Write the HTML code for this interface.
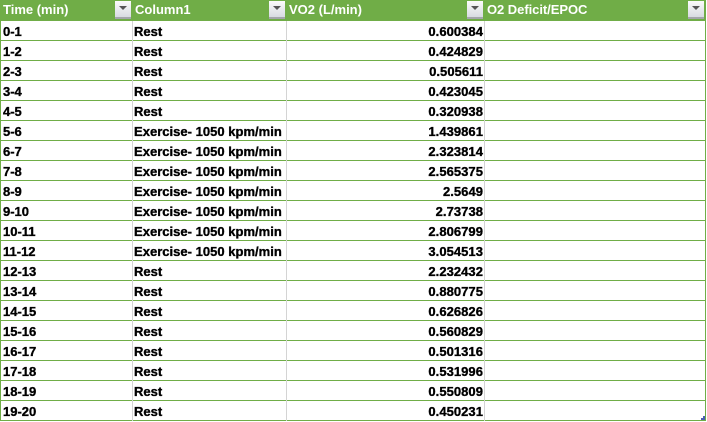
<!DOCTYPE html>
<html><head><meta charset="utf-8">
<style>
html,body{margin:0;padding:0;background:#fff;width:707px;height:422px;overflow:hidden}
body{position:relative;font-family:"Liberation Sans",sans-serif}
.hd{position:absolute;left:0;top:0;width:706px;height:21px;background:#70ad47}
.h{position:absolute;top:2px;height:16px;line-height:16px;color:#fff;font-size:13px;font-weight:bold;white-space:nowrap}
.b{position:absolute;top:1px;width:16px;height:18px;background:linear-gradient(#fbfbfb,#d8dbe2);border-bottom:2px solid #a4a6ab;box-sizing:border-box}
.b:after{content:"";position:absolute;left:4px;top:5px;border-left:4px solid transparent;border-right:4px solid transparent;border-top:4px solid #555}
.v{position:absolute;top:21px;width:1px;height:400px;background:#d4d4d4}
.e{position:absolute;top:0;width:1px;height:421px;background:#70ad47}
.r{position:absolute;left:0;width:706px;height:20px;box-sizing:border-box;border-bottom:1px solid #70ad47;font-size:13px;font-weight:bold;color:#000;line-height:20px;white-space:nowrap;-webkit-text-stroke:.35px #000}
.r span{position:absolute;top:1px}
.a{left:3px}.c{left:134px;letter-spacing:.02px}.d{right:223px;letter-spacing:.05px}
.n1{position:absolute;left:703px;top:416px;width:2px;height:2px;background:#4a5fb0}
.n2{position:absolute;left:701px;top:418px;width:4px;height:2px;background:#4a5fb0}
</style></head><body>
<div class="hd"></div>
<div class="h" style="left:3px">Time (min)</div>
<div class="h" style="left:135px">Column1</div>
<div class="h" style="left:289px">VO2 (L/min)</div>
<div class="h" style="left:487px;letter-spacing:-.05px">O2 Deficit/EPOC</div>
<div class="b" style="left:115px"></div>
<div class="b" style="left:269px"></div>
<div class="b" style="left:467px"></div>
<div class="b" style="left:688px"></div>

<div class="r" style="top:21px"><span class="a">0-1</span><span class="c">Rest</span><span class="d">0.600384</span></div>
<div class="r" style="top:41px"><span class="a">1-2</span><span class="c">Rest</span><span class="d">0.424829</span></div>
<div class="r" style="top:61px"><span class="a">2-3</span><span class="c">Rest</span><span class="d">0.505611</span></div>
<div class="r" style="top:81px"><span class="a">3-4</span><span class="c">Rest</span><span class="d">0.423045</span></div>
<div class="r" style="top:101px"><span class="a">4-5</span><span class="c">Rest</span><span class="d">0.320938</span></div>
<div class="r" style="top:121px"><span class="a">5-6</span><span class="c">Exercise- 1050 kpm/min</span><span class="d">1.439861</span></div>
<div class="r" style="top:141px"><span class="a">6-7</span><span class="c">Exercise- 1050 kpm/min</span><span class="d">2.323814</span></div>
<div class="r" style="top:161px"><span class="a">7-8</span><span class="c">Exercise- 1050 kpm/min</span><span class="d">2.565375</span></div>
<div class="r" style="top:181px"><span class="a">8-9</span><span class="c">Exercise- 1050 kpm/min</span><span class="d">2.5649</span></div>
<div class="r" style="top:201px"><span class="a">9-10</span><span class="c">Exercise- 1050 kpm/min</span><span class="d">2.73738</span></div>
<div class="r" style="top:221px"><span class="a">10-11</span><span class="c">Exercise- 1050 kpm/min</span><span class="d">2.806799</span></div>
<div class="r" style="top:241px"><span class="a">11-12</span><span class="c">Exercise- 1050 kpm/min</span><span class="d">3.054513</span></div>
<div class="r" style="top:261px"><span class="a">12-13</span><span class="c">Rest</span><span class="d">2.232432</span></div>
<div class="r" style="top:281px"><span class="a">13-14</span><span class="c">Rest</span><span class="d">0.880775</span></div>
<div class="r" style="top:301px"><span class="a">14-15</span><span class="c">Rest</span><span class="d">0.626826</span></div>
<div class="r" style="top:321px"><span class="a">15-16</span><span class="c">Rest</span><span class="d">0.560829</span></div>
<div class="r" style="top:341px"><span class="a">16-17</span><span class="c">Rest</span><span class="d">0.501316</span></div>
<div class="r" style="top:361px"><span class="a">17-18</span><span class="c">Rest</span><span class="d">0.531996</span></div>
<div class="r" style="top:381px"><span class="a">18-19</span><span class="c">Rest</span><span class="d">0.550809</span></div>
<div class="r" style="top:401px"><span class="a">19-20</span><span class="c">Rest</span><span class="d">0.450231</span></div>

<div class="v" style="left:132px"></div>
<div class="v" style="left:286px"></div>
<div class="v" style="left:484px"></div>
<div class="e" style="left:0"></div>
<div class="e" style="left:705px"></div>
<div class="n1"></div>
<div class="n2"></div>
</body></html>
